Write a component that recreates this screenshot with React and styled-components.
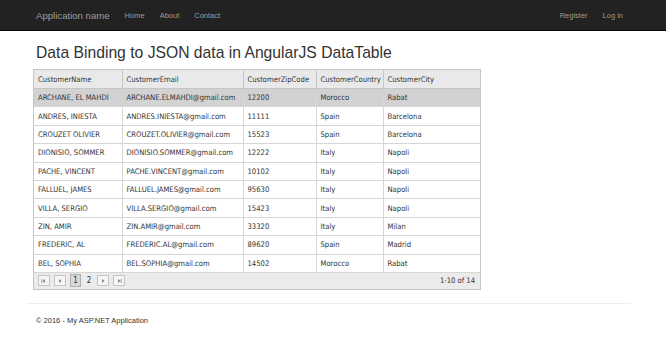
import React from "react";
import styled, { createGlobalStyle } from "styled-components";

const Global = createGlobalStyle`
  html, body { margin: 0; padding: 0; background: #fff; }
  body { font-family: "Liberation Sans", Arial, sans-serif; color: #333; }
`;

const Navbar = styled.div`
  height: 30px;
  background: #222;
  border-bottom: 1px solid #080808;
  display: flex;
  align-items: center;
  padding: 0 28px 0 36px;
`;

const Brand = styled.span`
  color: #9d9d9d;
  font-size: 9.6px;
  margin-right: 15px;
`;

const NavLink = styled.span`
  color: #9d9d9d;
  font-size: 7.5px;
  margin-right: 15px;
`;

const Spacer = styled.div`flex: 1;`;

const Container = styled.div`
  padding: 0 35px 0 33px;
`;

const Title = styled.h2`
  margin: 12px 0 7px 3px;
  font-weight: 400;
  font-size: 15.7px;
  color: #333;
  line-height: 19px;
`;

const Grid = styled.div`
  width: 446px;
  border: 1px solid #c5c5c5;
  font-family: Tahoma, "DejaVu Sans Condensed", "Liberation Sans", sans-serif;
  font-size: 7.6px;
  color: #333;
`;

const Table = styled.table`
  border-collapse: collapse;
  width: 100%;
  table-layout: fixed;
`;

const Th = styled.th`
  background: #e9e9e9;
  font-weight: 400;
  text-align: left;
  height: 18px;
  padding: 0 4px;
  border-left: 1px solid #c5c5c5;
  border-bottom: 1px solid #c5c5c5;
  &:first-child { border-left: none; }
`;

const Tr = styled.tr`
  background: ${(p) => (p.$selected ? "#d2d2d2" : "#fff")};
`;

const Td = styled.td`
  height: 17.4px;
  padding: 0 4px;
  border-left: 1px solid #d6d6d6;
  border-bottom: 1px solid #d6d6d6;
  white-space: nowrap;
  overflow: hidden;
  &:first-child { border-left: none; }
`;

const Pager = styled.div`
  background: #ebebeb;
  height: 16px;
  display: flex;
  align-items: center;
  padding: 0 4px;
  gap: 4px;
`;

const PageBtn = styled.span`
  width: 10px;
  height: 9px;
  border: 1px solid #c5c5c5;
  background: #f5f5f5;
  display: inline-flex;
  align-items: center;
  justify-content: center;
`;

const PageNum = styled.span`
  width: ${(p) => (p.$active ? "9px" : "8px")};
  height: 11px;
  display: inline-flex;
  align-items: center;
  justify-content: center;
  font-size: 8px;
  color: #333;
  border: ${(p) => (p.$active ? "1px solid #b0b0b0" : "none")};
  background: ${(p) => (p.$active ? "#d8d8d8" : "transparent")};
`;

const PagerInfo = styled.span`
  margin-left: auto;
  padding-right: 1px;
`;

const Hr = styled.hr`
  border: none;
  border-top: 1px solid #eee;
  margin: 13px 0 0 -6px;
  width: 604px;
`;

const Footer = styled.p`
  margin: 12px 0 0 3px;
  font-size: 7.5px;
  color: #333;
`;

const rows = [
  ["ARCHANE, EL MAHDI", "ARCHANE.ELMAHDI@gmail.com", "12200", "Morocco", "Rabat"],
  ["ANDRES, INIESTA", "ANDRES.INIESTA@gmail.com", "11111", "Spain", "Barcelona"],
  ["CROUZET OLIVIER", "CROUZET.OLIVIER@gmail.com", "15523", "Spain", "Barcelona"],
  ["DIONISIO, SOMMER", "DIONISIO.SOMMER@gmail.com", "12222", "Italy", "Napoli"],
  ["PACHE, VINCENT", "PACHE.VINCENT@gmail.com", "10102", "Italy", "Napoli"],
  ["FALLUEL, JAMES", "FALLUEL.JAMES@gmail.com", "95630", "Italy", "Napoli"],
  ["VILLA, SERGIO", "VILLA.SERGIO@gmail.com", "15423", "Italy", "Napoli"],
  ["ZIN, AMIR", "ZIN.AMIR@gmail.com", "33320", "Italy", "Milan"],
  ["FREDERIC, AL", "FREDERIC.AL@gmail.com", "89620", "Spain", "Madrid"],
  ["BEL, SOPHIA", "BEL.SOPHIA@gmail.com", "14502", "Morocco", "Rabat"],
];

const cols = [
  ["CustomerName", 88],
  ["CustomerEmail", 121],
  ["CustomerZipCode", 73],
  ["CustomerCountry", 67],
  ["CustomerCity", 97],
];

const Arrow = ({ dir, bar }) => (
  <svg width="6" height="6" viewBox="0 0 6 6">
    {dir === "l" ? <path d="M4 1 L1.5 3 L4 5 Z" fill="#888" /> : <path d="M2 1 L4.5 3 L2 5 Z" fill="#888" />}
    {bar && (dir === "l" ? <rect x="0.5" y="1" width="0.8" height="4" fill="#888" /> : <rect x="4.7" y="1" width="0.8" height="4" fill="#888" />)}
  </svg>
);

export default function App() {
  return (
    <>
      <Global />
      <Navbar>
        <Brand>Application name</Brand>
        <NavLink>Home</NavLink>
        <NavLink>About</NavLink>
        <NavLink>Contact</NavLink>
        <Spacer />
        <NavLink>Register</NavLink>
        <NavLink>Log in</NavLink>
      </Navbar>
      <Container>
        <Title>Data Binding to JSON data in AngularJS DataTable</Title>
        <Grid>
          <Table>
            <colgroup>
              {cols.map(([n, w]) => (
                <col key={n} style={{ width: w }} />
              ))}
            </colgroup>
            <thead>
              <tr>
                {cols.map(([n]) => (
                  <Th key={n}>{n}</Th>
                ))}
              </tr>
            </thead>
            <tbody>
              {rows.map((r, i) => (
                <Tr key={i} $selected={i === 0}>
                  {r.map((c, j) => (
                    <Td key={j}>{c}</Td>
                  ))}
                </Tr>
              ))}
            </tbody>
          </Table>
          <Pager>
            <PageBtn><Arrow dir="l" bar /></PageBtn>
            <PageBtn><Arrow dir="l" /></PageBtn>
            <PageNum $active>1</PageNum>
            <PageNum>2</PageNum>
            <PageBtn><Arrow dir="r" /></PageBtn>
            <PageBtn><Arrow dir="r" bar /></PageBtn>
            <PagerInfo>1-10 of 14</PagerInfo>
          </Pager>
        </Grid>
        <Hr />
        <Footer>© 2016 - My ASP.NET Application</Footer>
      </Container>
    </>
  );
}
